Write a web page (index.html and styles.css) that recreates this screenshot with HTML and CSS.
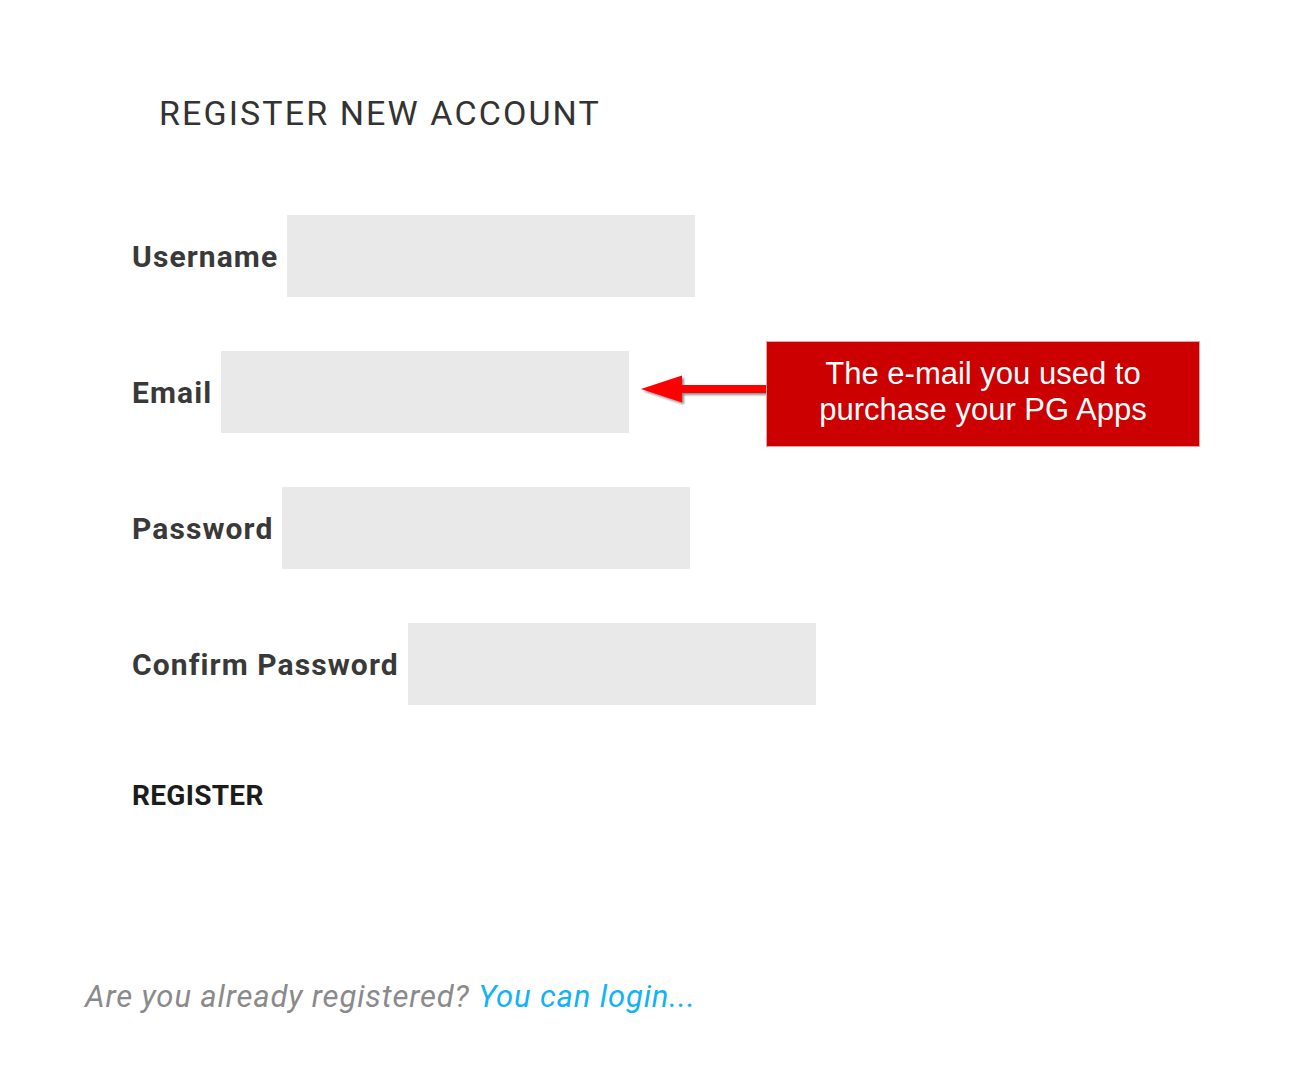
FILE: index.html
```html
<!DOCTYPE html>
<html>
<head>
<meta charset="utf-8">
<link rel="stylesheet" href="styles.css">
</head>
<body>
<main class="page">
  <h1 class="title">REGISTER NEW ACCOUNT</h1>
  <form class="form">
    <div class="row"><label class="label">Username</label><span class="input"></span></div>
    <div class="row row-email"><label class="label">Email</label><span class="input"></span>
      <div class="callout">
        <svg class="arrow" width="126" height="34" viewBox="0 0 126 34">
          <defs>
            <filter id="sh" x="-10%" y="-30%" width="130%" height="170%">
              <feGaussianBlur in="SourceAlpha" stdDeviation="1.2"/>
              <feOffset dx="2" dy="2" result="b"/>
              <feComponentTransfer><feFuncA type="linear" slope="0.45"/></feComponentTransfer>
              <feMerge><feMergeNode/><feMergeNode in="SourceGraphic"/></feMerge>
            </filter>
          </defs>
          <path filter="url(#sh)" d="M1 14 L42 0.5 L42 10 L126 10 L126 18 L42 18 L42 27.5 Z" fill="#ff0000"/>
        </svg>
        <div class="note">The e-mail you used to<br>purchase your PG Apps</div>
      </div>
    </div>
    <div class="row"><label class="label">Password</label><span class="input"></span></div>
    <div class="row"><label class="label">Confirm Password</label><span class="input"></span></div>
    <div class="submit">REGISTER</div>
  </form>
  <p class="footer">Are you already registered? <a class="link" href="#">You can login...</a></p>
</main>
</body>
</html>
```
FILE: styles.css
```css
html, body {
  margin: 0;
  padding: 0;
  background: #ffffff;
}
.page {
  font-family: Roboto, "Liberation Sans", sans-serif;
  padding: 0 0 0 85px;
}
.title {
  margin: 0;
  padding: 93px 0 0 74px;
  font-size: 34px;
  line-height: 40px;
  font-weight: 400;
  letter-spacing: 2.1px;
  color: #333333;
}
.form {
  padding: 82px 0 0 47px;
}
.row {
  display: flex;
  align-items: center;
  height: 82px;
  margin-bottom: 54px;
  position: relative;
}
.label {
  font-size: 30px;
  font-weight: 700;
  letter-spacing: 1.1px;
  color: #393939;
  margin-right: 9px;
}
.input {
  display: block;
  width: 408px;
  height: 82px;
  background: #e9e9e9;
}
.callout {
  position: absolute;
  left: 508px;
  top: -10px;
  display: flex;
  align-items: center;
}
.arrow {
  display: block;
  margin-top: -4px;
}
.note {
  width: 434px;
  height: 106px;
  box-sizing: border-box;
  background: #cc0000;
  border: 1px solid #e8a0a0;
  color: #ffffff;
  font-family: "Liberation Sans", Arial, sans-serif;
  font-size: 31px;
  line-height: 36px;
  text-align: center;
  padding-top: 14px;
}
.submit {
  padding-top: 20px;
  font-size: 28px;
  font-weight: 700;
  letter-spacing: 0.3px;
  color: #1c1c1c;
}
.footer {
  margin: 166px 0 0 0;
  font-size: 31px;
  font-style: italic;
  letter-spacing: 0.86px;
  color: #8a8a8a;
}
.link {
  color: #12b2f5;
  text-decoration: none;
}
```
